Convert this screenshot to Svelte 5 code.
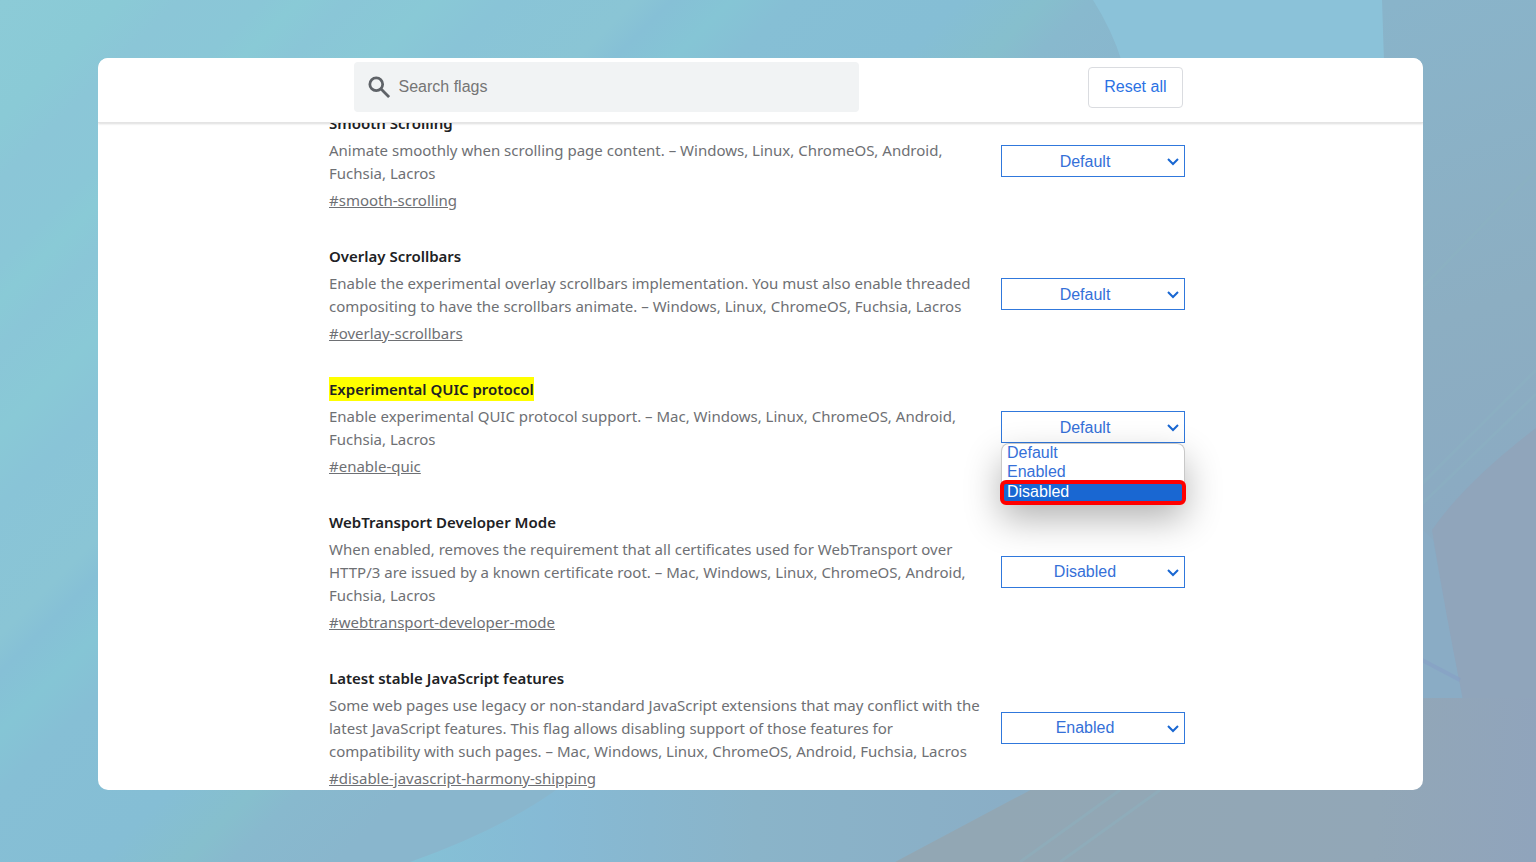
<script lang="ts">
  type Flag = {
    id: string
    title: string
    text: string
    value: string
    open?: boolean
  }

  const options = ["Default", "Enabled", "Disabled"];

  let query = $state("");
  let flags: Flag[] = $state([
    {
      id: "smooth-scrolling",
      title: "Smooth Scrolling",
      text: "Animate smoothly when scrolling page content. – Windows, Linux, ChromeOS, Android, Fuchsia, Lacros",
      value: "Default"
    },
    {
      id: "overlay-scrollbars",
      title: "Overlay Scrollbars",
      text: "Enable the experimental overlay scrollbars implementation. You must also enable threaded compositing to have the scrollbars animate. – Windows, Linux, ChromeOS, Fuchsia, Lacros",
      value: "Default"
    },
    {
      id: "enable-quic",
      title: "Experimental QUIC protocol",
      text: "Enable experimental QUIC protocol support. – Mac, Windows, Linux, ChromeOS, Android, Fuchsia, Lacros",
      value: "Default",
      open: true
    },
    {
      id: "webtransport-developer-mode",
      title: "WebTransport Developer Mode",
      text: "When enabled, removes the requirement that all certificates used for WebTransport over HTTP/3 are issued by a known certificate root. – Mac, Windows, Linux, ChromeOS, Android, Fuchsia, Lacros",
      value: "Disabled"
    },
    {
      id: "disable-javascript-harmony-shipping",
      title: "Latest stable JavaScript features",
      text: "Some web pages use legacy or non-standard JavaScript extensions that may conflict with the latest JavaScript features. This flag allows disabling support of those features for compatibility with such pages. – Mac, Windows, Linux, ChromeOS, Android, Fuchsia, Lacros",
      value: "Enabled"
    }
  ]);

  function choose(flag: Flag, value: string) {
    flag.value = value;
    flag.open = false;
  }

  function resetAll() {
    for (const flag of flags) {
      choose(flag, "Default");
    }
  }
</script>

<div class="page">
  <svg class="backdrop" viewBox="0 0 1536 862" preserveAspectRatio="none" aria-hidden="true">
    <defs>
      <linearGradient id="base" gradientUnits="userSpaceOnUse" x1="0" y1="0" x2="600" y2="600">
        <stop offset="0" stop-color="#8ccbd7" />
        <stop offset="0.1" stop-color="#8acad6" />
        <stop offset="0.15" stop-color="#8bc6d7" />
        <stop offset="0.22" stop-color="#8ac7d7" />
        <stop offset="0.25" stop-color="#89cad6" />
        <stop offset="0.29" stop-color="#8ac6d7" />
        <stop offset="0.36" stop-color="#89c9d6" />
        <stop offset="0.42" stop-color="#89c4d7" />
        <stop offset="0.53" stop-color="#8ac5d5" />
        <stop offset="0.56" stop-color="#86c0d6" />
        <stop offset="0.61" stop-color="#85c5d5" />
        <stop offset="0.66" stop-color="#86bfd5" />
        <stop offset="0.8" stop-color="#85bed5" />
        <stop offset="0.87" stop-color="#86bfcd" />
        <stop offset="0.91" stop-color="#88b9ce" />
        <stop offset="1" stop-color="#89b6cd" />
      </linearGradient>
      <linearGradient id="low" x1="0" y1="0" x2="1" y2="0">
        <stop offset="0" stop-color="#85c1d6" />
        <stop offset="0.2" stop-color="#86bad5" />
        <stop offset="0.5" stop-color="#8ab4c9" />
        <stop offset="1" stop-color="#8aacc5" />
      </linearGradient>
      <linearGradient id="right" gradientUnits="userSpaceOnUse" x1="1400" y1="0" x2="1600" y2="600">
        <stop offset="0" stop-color="#89b4ca" />
        <stop offset="0.5" stop-color="#8caec2" />
        <stop offset="1" stop-color="#8aa8c2" />
      </linearGradient>
      <linearGradient id="corner" gradientUnits="userSpaceOnUse" x1="1000" y1="800" x2="1536" y2="840">
        <stop offset="0" stop-color="#92a7b4" />
        <stop offset="0.7" stop-color="#92a7b7" />
        <stop offset="1" stop-color="#90a4bc" />
      </linearGradient>
    </defs>
    <rect width="1536" height="862" fill="url(#base)" />
    <path d="M410 862Q500 830 556 790L580 770H1100L895 862Z" fill="url(#low)" />
    <path d="M1093 0Q1112 30 1122 62H1400V0Z" fill="#8bc2d9" />
    <path d="M1382 0 1384 62 1400 862H1536V0Z" fill="url(#right)" />
    <path d="M1423 530 1433 540 1463 700H1423Z" fill="#8aacc5" />
    <path d="M1536 428Q1465 482 1432 530 1445 610 1463 700H1536Z" fill="#90a5bb" />
    <path d="M1536 698H1400V770H1068L895 862H1536Z" fill="url(#corner)" />
    <path d="M1422 660 1460 680" stroke="#87a0c6" stroke-width="4" opacity="0.6" />
    <g stroke="#8db4c2" stroke-width="3" opacity="0.4">
      <path d="M1420 290 1536 170M1420 486 1536 370M1420 506 1536 394M1020 862 1120 790M1060 862 1160 790" />
    </g>
  </svg>

  <main class="window">
    <header>
      <div class="bar">
        <label class="search">
          <svg viewBox="0 0 24 24" aria-hidden="true">
            <circle cx="9" cy="9" r="7" />
            <path d="M14 14 23 23" />
          </svg>
          <input type="text" placeholder="Search flags" aria-label="Search flags" bind:value={query} />
        </label>
        <button class="reset" onclick={resetAll}>Reset all</button>
      </div>
    </header>

    <div class="flags">
      {#each flags as flag}
        <section class="flag" id={flag.id}>
          <div class="info">
            <h2><label for={"select-" + flag.id} class:marked={flag.id == "enable-quic"}>{flag.title}</label></h2>
            <p>{flag.text}</p>
            <a href={"#" + flag.id}>#{flag.id}</a>
          </div>
          <div class="picker">
            <select id={"select-" + flag.id} bind:value={flag.value}>
              {#each options as option}
                <option>{option}</option>
              {/each}
            </select>
            <svg class="chevron" viewBox="0 0 12 8" aria-hidden="true">
              <path d="M1 1 6 6 11 1" />
            </svg>
            {#if flag.open}
              <div class="menu">
                {#each options as option}
                  <button class:active={option == "Disabled"} onclick={() => choose(flag, option)}>{option}</button>
                {/each}
              </div>
            {/if}
          </div>
        </section>
      {/each}
    </div>
  </main>
</div>

<style>
:global(body) {
  margin: 0;
}

.page {
  position: relative;
  box-sizing: border-box;
  min-height: 100vh;
  padding: 58px 113px 72px 98px;
  font-family: "Noto Sans", "Open Sans", sans-serif;
  font-size: 15px;
  line-height: 23px;
  color: #202124;
}

.backdrop {
  position: absolute;
  inset: 0;
  width: 100%;
  height: 100%;
}

.window {
  position: relative;
  overflow: hidden;
  background: #fff;
  border-radius: 10px;
}

header {
  position: relative;
  z-index: 1;
  padding: 4px 16px 10px;
  background: #fff;
  border-bottom: 1px solid #e4e4e4;
  box-shadow: 0 1px 2px rgba(0, 0, 0, 0.14);
}

.bar {
  display: flex;
  align-items: center;
  justify-content: space-between;
  max-width: 829px;
  margin: 0 auto;
  padding-left: 15px;
}

.search {
  display: flex;
  align-items: center;
  gap: 9px;
  box-sizing: border-box;
  flex: 0 1 505px;
  height: 50px;
  padding: 0 14px;
  background: #f1f3f4;
  border-radius: 4px;
}

.search svg {
  width: 22px;
  height: 22px;
  fill: none;
  stroke: #5f6368;
  stroke-width: 3;
}

.search input {
  flex: 1;
  min-width: 0;
  padding: 0;
  border: 0;
  outline: 0;
  background: none;
  font: 16px "Liberation Sans", sans-serif;
}

.search input::placeholder {
  color: #757575;
  opacity: 1;
}

.reset {
  height: 41px;
  padding: 0 15px;
  border: 1px solid #dadce0;
  border-radius: 4px;
  background: #fff;
  color: #2b72e4;
  font: 16px "Liberation Sans", sans-serif;
}

.flags {
  display: flex;
  flex-direction: column;
  gap: 33px;
  box-sizing: border-box;
  max-width: 863px;
  margin: -11px auto 0;
  padding-right: 7px;
}

.flag {
  display: flex;
  align-items: center;
  justify-content: space-between;
  gap: 16px;
}

.info {
  flex: 0 1 656px;
}

h2 {
  margin: 0;
  font-size: 15px;
  font-weight: 600;
  line-height: 23px;
}

.marked {
  padding: 2px 0;
  background: #ff0;
}

p {
  margin: 4px 0;
  color: #6e7074;
}

.info a {
  display: block;
  width: fit-content;
  color: #6e7074;
}

.picker {
  position: relative;
  flex: 0 0 184px;
  margin-bottom: 2px;
}

select {
  display: block;
  appearance: none;
  box-sizing: border-box;
  width: 100%;
  height: 32px;
  padding: 0 18px 0 2px;
  border: 1px solid #3078dc;
  border-radius: 0;
  background: #fff;
  color: #3570d8;
  font: 16px "Liberation Sans", sans-serif;
  text-align: center;
  text-align-last: center;
}

.chevron {
  position: absolute;
  top: 13px;
  right: 6px;
  width: 12px;
  height: 8px;
  fill: none;
  stroke: #1967d2;
  stroke-width: 2;
  pointer-events: none;
}

.menu {
  position: absolute;
  z-index: 1;
  top: 100%;
  left: 0;
  right: 0;
  box-sizing: border-box;
  border: 1px solid #c8c8c8;
  border-bottom: 0;
  border-radius: 8px 8px 4px 4px;
  background: #fff;
  box-shadow: 0 16px 36px rgba(0, 0, 0, 0.3);
}

.menu button {
  display: block;
  width: 100%;
  height: 19px;
  padding: 0 5px 2px;
  border: 0;
  background: none;
  color: #3570d8;
  font: 16px "Liberation Sans", sans-serif;
  text-align: left;
}

.menu .active {
  height: 21px;
  background: #1967d2;
  color: #fff;
  outline: 4px solid #f00;
  outline-offset: -2px;
  border-radius: 4px;
}
</style>
